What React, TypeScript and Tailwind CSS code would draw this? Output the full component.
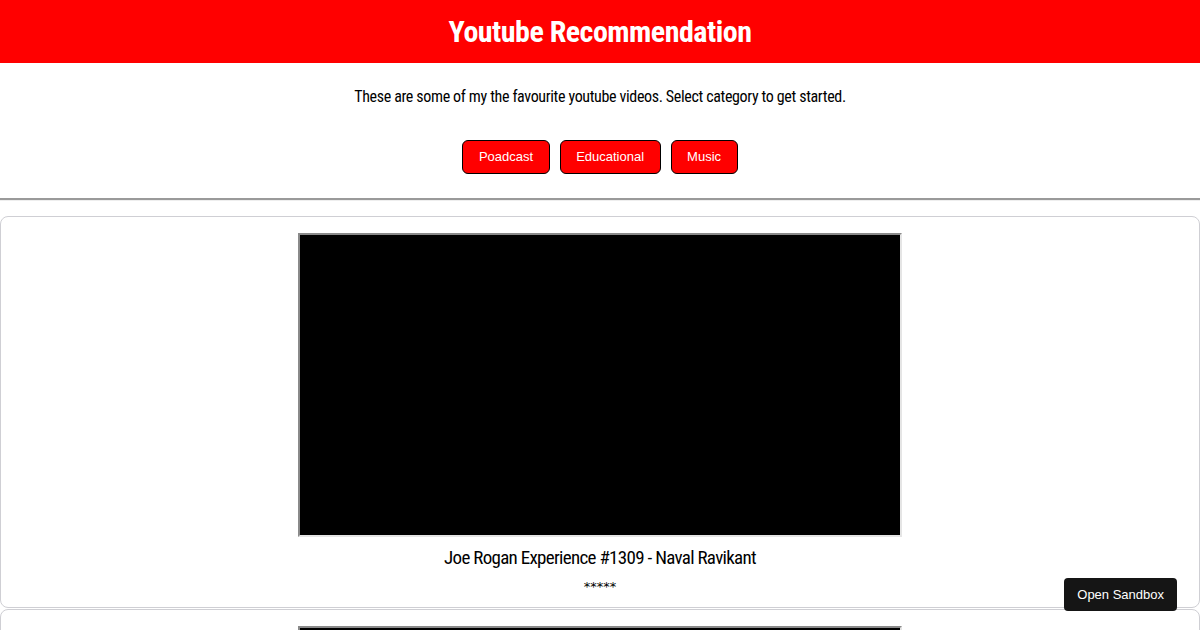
import React from 'react';

const videos = [
  { name: 'Joe Rogan Experience #1309 - Naval Ravikant', rating: '*****' },
  { name: 'The Tim Ferriss Show - Naval Ravikant', rating: '****' },
];

const categories = ['Poadcast', 'Educational', 'Music'];

const condensed = { fontFamily: '"Roboto Condensed", "Open Sans Condensed", "DejaVu Sans Condensed", sans-serif' };
const arial = { fontFamily: '"Liberation Sans", Arial, sans-serif' };

export default function App() {
  return (
    <div className="min-h-screen bg-white text-black" style={condensed}>
      <header className="flex h-[63px] items-center justify-center bg-[#ff0000]">
        <h1 className="text-[30px] font-bold leading-none tracking-[-0.5px] text-white">Youtube Recommendation</h1>
      </header>

      <p className="mt-[24px] text-center text-[16px] leading-[20px] tracking-[-0.35px]">
        These are some of my the favourite youtube videos. Select category to get started.
      </p>

      <div className="mt-[33px] flex justify-center gap-[10px]">
        {categories.map((c) => (
          <button
            key={c}
            className="h-[34px] rounded-[6px] border border-black bg-[#ff0000] px-[15.5px] text-[13px] text-white"
            style={arial}
          >
            {c}
          </button>
        ))}
      </div>

      <hr className="mt-[24px] border-t-2 border-t-[#9a9a9a] border-b border-b-[#eeeeee]" />

      <ul className="mt-[15px]">
        {videos.map((v) => (
          <li key={v.name} className="mb-[1px] rounded-[8px] border border-[#cfcfd4] px-4 pb-[12px] pt-[16px] text-center">
            <div className="mx-auto h-[304px] w-[604px] border-2 border-t-[#8a8a8a] border-l-[#8a8a8a] border-r-[#e5e5e5] border-b-[#e5e5e5] bg-black" />
            <div className="mt-[8px] text-[19px] leading-[26px] tracking-[-0.7px]">{v.name}</div>
            <div className="mt-[8px] text-[13px] leading-[16px]" style={{ fontFamily: '"DejaVu Sans", sans-serif' }}>
              {v.rating}
            </div>
          </li>
        ))}
      </ul>

      <button
        className="fixed bottom-[19px] right-[23px] h-[33px] rounded-[4px] bg-[#151515] px-[13px] text-[13px] text-white"
        style={arial}
      >
        Open Sandbox
      </button>
    </div>
  );
}
